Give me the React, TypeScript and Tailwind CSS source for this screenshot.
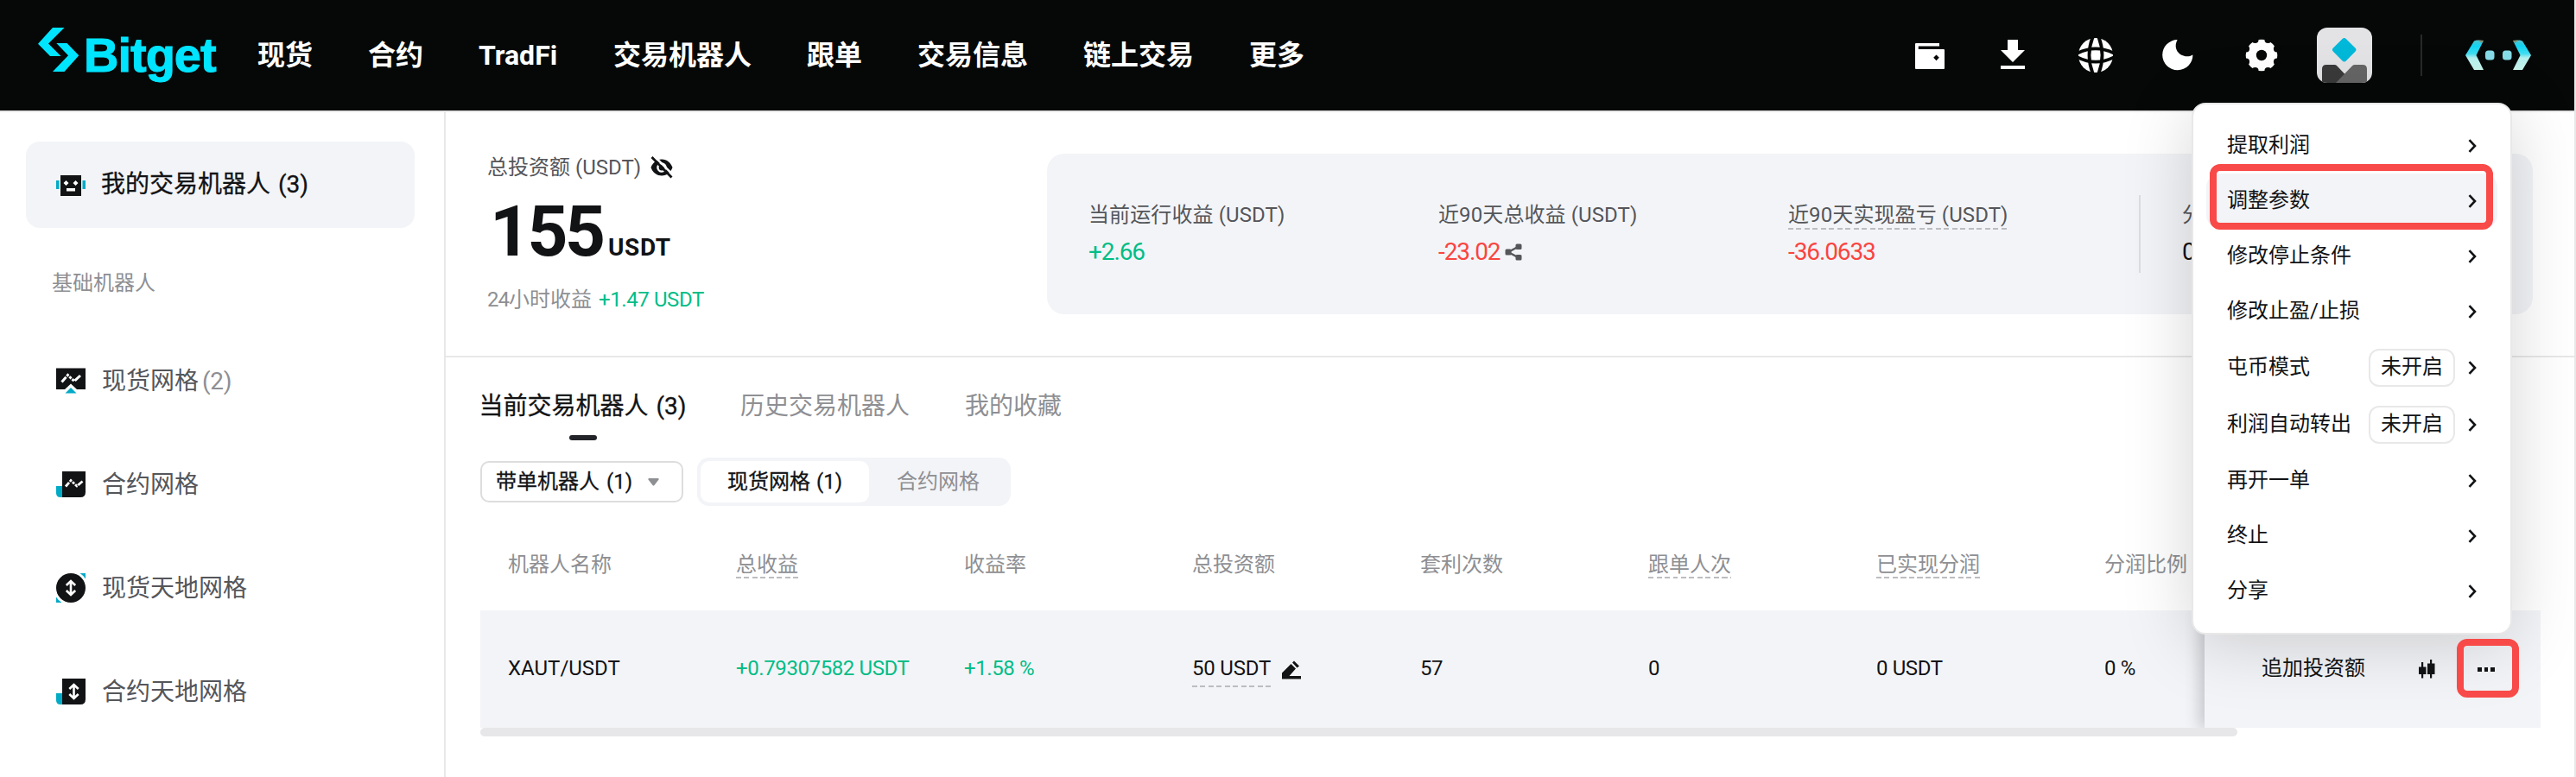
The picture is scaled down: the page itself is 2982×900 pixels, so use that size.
import React from "react";

const FONT = "font-['Roboto','Noto_Sans_CJK_SC',sans-serif]";

function LogoMark() {
  return (
    <svg width="48" height="52" viewBox="0 0 48 52" fill="#00e5ff">
      <path d="M17 0H30.5L12 18.5L26.5 33H14L0 18.7Z" />
      <path d="M21.3 18H33.5L47.3 32.3L30.5 51H17L35 32.3Z" />
    </svg>
  );
}

function WalletIcon() {
  return (
    <svg width="48" height="48" viewBox="0 0 48 48" fill="#fff">
      <path d="M8 10H35V13.6H10.8V17H40Q41 17 41 18V39Q41 40 40 40H8Q7 40 7 39V11Q7 10 8 10ZM31.5 23.4L28.2 26.8L31.5 30.2L34.8 26.8Z" fillRule="evenodd" />
    </svg>
  );
}

function DownloadIcon() {
  return (
    <svg width="48" height="48" viewBox="0 0 48 48" fill="#fff">
      <path d="M18 6H30V18H38L24 32L10 18H18ZM10 36H38V40H10Z" />
    </svg>
  );
}

function GlobeIcon() {
  return (
    <svg width="48" height="48" viewBox="0 0 48 48">
      <circle cx="24" cy="24" r="20" fill="#fff" />
      <g fill="none" stroke="#060808" strokeWidth="3.8">
        <path d="M20.5 3Q12.5 24 20.5 45" />
        <path d="M27.5 3Q35.5 24 27.5 45" />
        <path d="M3 21.6Q24 11 45 21.6" />
        <path d="M3 26.4Q24 37 45 26.4" />
      </g>
    </svg>
  );
}

function MoonIcon() {
  return (
    <svg width="48" height="48" viewBox="0 0 48 48" fill="#fff">
      <path d="M22.6 6A17.6 17.6 0 1 0 40.4 23.4C30 29.5 15.5 19.5 22.6 6Z" />
    </svg>
  );
}

const NOTCHES = [0, 1, 2, 3, 4, 5, 6, 7].map((k) => {
  const a = ((22.5 + 45 * k) * Math.PI) / 180;
  return { x: 24 + 19.4 * Math.cos(a), y: 24 + 19.4 * Math.sin(a) };
});

function GearIcon() {
  return (
    <svg width="48" height="48" viewBox="0 0 48 48">
      <circle cx="24" cy="24" r="18.3" fill="#fff" />
      {NOTCHES.map((n, i) => (
        <circle key={i} cx={n.x} cy={n.y} r="4" fill="#060808" />
      ))}
      <circle cx="24" cy="24" r="6.2" fill="#060808" />
    </svg>
  );
}

function Avatar() {
  return (
    <svg className="rounded-xl" width="64" height="64" viewBox="0 0 64 64">
      <rect width="64" height="64" fill="#e3e3e5" />
      <rect x="21.2" y="15.2" width="21" height="21" rx="3" fill="#00b8d9" transform="rotate(45 31.7 25.7)" />
      <path d="M6 64V48Q6 43 11 43H20.5Q22 43 23 44L33 54.5V64Z" fill="#3a3a3a" />
      <path d="M22 64L41 44.2Q42.200 43 44 43H53Q58 43 58 48V64Z" fill="#656565" />
    </svg>
  );
}

function BracketIcon() {
  return (
    <svg width="76" height="36" viewBox="0 0 76 36">
      <defs>
        <linearGradient id="cy" x1="0" y1="0" x2="0" y2="1">
          <stop offset="0" stopColor="#4fc3d0" />
          <stop offset="0.2" stopColor="#0fd4f5" />
          <stop offset="0.45" stopColor="#3fdcf0" />
          <stop offset="0.6" stopColor="#b5f0ee" />
          <stop offset="1" stopColor="#c8f3ea" />
        </linearGradient>
      </defs>
      <path d="M10 1.500L13 0.500L21 1L12.500 18L21 35H10L0 18Z" fill="url(#cy)" />
      <path d="M66 1.500L63 0.500L55 1L63.500 18L55 35H66L76 18Z" fill="url(#cy)" />
      <path d="M15 0.500L21 1L18.500 4Z" fill="#8a8f6a" />
      <path d="M61 0.500L55 1L57.500 4Z" fill="#8a8f6a" />
      <rect x="23" y="12.500" width="10.500" height="11" rx="3.500" fill="#86dbe6" />
      <rect x="43" y="12.500" width="10.500" height="11" rx="3.500" fill="#86dbe6" />
    </svg>
  );
}

function RobotIcon() {
  return (
    <svg width="34" height="34" viewBox="0 0 34 34">
      <path d="M0 12H3.500V22H0ZM30.500 12H34V22H30.500Z" fill="#03aac6" />
      <rect x="5" y="6" width="24" height="24" fill="#121315" />
      <path d="M11.500 12L14.500 15L11.500 18L8.500 15ZM22.500 12L25.500 15L22.500 18L19.500 15ZM12 21H22V24.500H12Z" fill="#fff" />
    </svg>
  );
}

function SpotGridIcon() {
  return (
    <svg width="34" height="34" viewBox="0 0 34 34">
      <path d="M0 2.500H34V27H24L17 20.500L10 27H0Z" fill="#121315" />
      <path d="M17 25L23.500 31.500H10.500Z" fill="#03aac6" />
      <path d="M6.500 18.500L13.500 10.500L21 17.500L28 11" fill="none" stroke="#fff" strokeWidth="3" strokeDasharray="7.600 1.300 3 1.300 3 1.300 3 1.300 10" />
    </svg>
  );
}

function FuturesGridIcon() {
  return (
    <svg width="34" height="34" viewBox="0 0 34 34">
      <path d="M7 2H34V26Q34 32 28 32H7Z" fill="#121315" />
      <path d="M0 19H7V32H5Q0 32 0 27Z" fill="#03aac6" />
      <path d="M11 19.500L17 12.500L24 19L30.500 13.500" fill="none" stroke="#fff" strokeWidth="2.800" strokeDasharray="6.200 1.300 3 1.300 3 1.300 3 1.300 10" />
    </svg>
  );
}

function SpotSkyIcon() {
  return (
    <svg width="34" height="34" viewBox="0 0 34 34">
      <circle cx="17" cy="17" r="17" fill="#121315" />
      <path d="M27.500 0H34V6.500Q31.500 2.500 27.500 0ZM6.500 34H0V27.500Q2.500 31.500 6.500 34Z" fill="#03aac6" />
      <path d="M17 10V24M11.800 14L17 9L22.200 14M11.800 20L17 25L22.200 20" fill="none" stroke="#fff" strokeWidth="2.600" />
    </svg>
  );
}

function FuturesSkyIcon() {
  return (
    <svg width="34" height="34" viewBox="0 0 34 34">
      <path d="M7 2H34V26Q34 32 28 32H7Z" fill="#121315" />
      <path d="M0 19H7V32H5Q0 32 0 27Z" fill="#03aac6" />
      <path d="M20.500 10V24M15.300 14L20.500 9L25.700 14M15.300 20L20.500 25L25.700 20" fill="none" stroke="#fff" strokeWidth="2.600" />
    </svg>
  );
}

function EyeOffIcon() {
  return (
    <svg width="26" height="26" viewBox="0 0 26 26">
      <path d="M13 3.500C7 3.500 2.500 7.500 0.500 13C2.500 18.500 7 22.500 13 22.500S23.500 18.500 25.500 13C23.500 7.500 19 3.500 13 3.500ZM13 7.200A5.800 5.800 0 1 1 13 18.800A5.800 5.800 0 1 1 13 7.200Z" fill="#121315" fillRule="evenodd" />
      <circle cx="13" cy="13" r="3.400" fill="#121315" />
      <path d="M3.500 -1L27 22.500" stroke="#fff" strokeWidth="2.600" />
      <path d="M1.500 1L24.500 24.500" stroke="#121315" strokeWidth="2.800" />
    </svg>
  );
}

function ShareIcon() {
  return (
    <svg width="20" height="20" viewBox="0 0 20 20" fill="#55565a">
      <path d="M16 3.500L4 10L16 16.500" fill="none" stroke="#55565a" strokeWidth="2.400" />
      <rect x="12.500" y="0.500" width="7" height="6.500" rx="1.500" />
      <rect x="12.500" y="13" width="7" height="6.500" rx="1.500" />
      <rect x="0.500" y="6.500" width="7" height="7" rx="1.500" />
    </svg>
  );
}

function PencilIcon() {
  return (
    <svg width="22" height="22" viewBox="0 0 22 22" fill="#121315">
      <path d="M0 14.500L10.500 4L16 9.500L8.500 18H22V21.500H0Z" />
      <path d="M12 2.500L14 0.500L20 6.500L17.500 8.500Z" />
    </svg>
  );
}

function CandlesIcon() {
  return (
    <svg width="19" height="22" viewBox="0 0 19 22" fill="#121315">
      <path d="M3 3H5.200V8.500H8.500V17H5.200V21.500H3V17H0V8.500H3ZM13 0H15.200V4.500H18.500V17H15.200V21.500H13V17H10V4.500H13Z" />
    </svg>
  );
}

function Chevron() {
  return (
    <svg width="10" height="16" viewBox="0 0 10 16">
      <path d="M1.500 1.200L8 8L1.500 14.800" fill="none" stroke="#121315" strokeWidth="2.600" />
    </svg>
  );
}

const NAV = ["现货", "合约", "TradFi", "交易机器人", "跟单", "交易信息", "链上交易", "更多"];

const SIDE = [
  { icon: <SpotGridIcon />, label: "现货网格", count: "(2)" },
  { icon: <FuturesGridIcon />, label: "合约网格" },
  { icon: <SpotSkyIcon />, label: "现货天地网格" },
  { icon: <FuturesSkyIcon />, label: "合约天地网格" },
];

const COLUMNS = [
  { title: "机器人名称", dashed: false },
  { title: "总收益", dashed: true },
  { title: "收益率", dashed: false },
  { title: "总投资额", dashed: false },
  { title: "套利次数", dashed: false },
  { title: "跟单人次", dashed: true },
  { title: "已实现分润", dashed: true },
  { title: "分润比例", dashed: false },
];

const MENU = [
  { label: "提取利润" },
  { label: "调整参数", active: true },
  { label: "修改停止条件" },
  { label: "修改止盈/止损" },
  { label: "屯币模式", chip: "未开启" },
  { label: "利润自动转出", chip: "未开启" },
  { label: "再开一单" },
  { label: "终止" },
  { label: "分享" },
];

const DASH =
  "bg-[repeating-linear-gradient(90deg,#bcbdc0_0_6px,transparent_6px_9.5px)] bg-[length:100%_2px] bg-bottom bg-no-repeat";

function Header() {
  return (
    <header className="flex h-[130px] shrink-0 items-center border-b-2 border-[#e8e8e8] bg-[#060808]">
      <div className="flex h-full w-[298px] shrink-0 pl-11 pt-8">
        <LogoMark />
        <span className="ml-[5px] font-['Liberation_Sans',sans-serif] text-[56px] font-bold leading-[64px] tracking-[-1px] text-[#00e5ff] [-webkit-text-stroke:1px_#00e5ff]">
          Bitget
        </span>
      </div>
      <nav className="flex flex-1 gap-16 whitespace-nowrap text-[32px] font-bold leading-[48px] text-white">
        {NAV.map((n) => (
          <span key={n} className={n === "TradFi" ? "w-[92px]" : ""}>
            {n}
          </span>
        ))}
      </nav>
      <div className="flex items-center gap-12">
        <WalletIcon />
        <DownloadIcon />
        <GlobeIcon />
        <MoonIcon />
        <GearIcon />
      </div>
      <div className="ml-10">
        <Avatar />
      </div>
      <div className="ml-14 h-12 w-0.5 bg-[#26282b]" />
      <div className="ml-[50px] mr-[52px]">
        <BracketIcon />
      </div>
    </header>
  );
}

function Sidebar() {
  return (
    <aside className="w-[516px] shrink-0 border-r-2 border-[#e8e8e8] pl-[30px] pr-[34px] pt-[34px]">
      <div className="flex h-[100px] w-[450px] items-center rounded-2xl bg-[#f3f4f7] pl-[35px]">
        <RobotIcon />
        <span className="ml-[18px] text-[28px] leading-10 text-[#121315] [word-spacing:2px] [-webkit-text-stroke:0.3px_#121315]">
          我的交易机器人 (3)
        </span>
      </div>
      <div className="mt-[46px] pl-[30px] text-2xl leading-9 text-[#8e8f93]">基础机器人</div>
      <div className="mt-[35px]">
        {SIDE.map((s) => (
          <div key={s.label} className="flex h-[120px] items-center pl-[35px] text-[28px] leading-10 text-[#55565a]">
            {s.icon}
            <span className="ml-[19px] mt-0.5">{s.label}</span>
            {s.count && <span className="ml-1 mt-0.5 tracking-[-0.3px] text-[#8e8f93]">{s.count}</span>}
          </div>
        ))}
      </div>
    </aside>
  );
}

function Stat({ label, value, tone, dashed, share }: { label: string; value: string; tone: string; dashed?: boolean; share?: boolean }) {
  return (
    <div className="w-[405px] shrink-0">
      <div className="flex">
        <span className={`h-[35px] text-2xl leading-9 tracking-[0.1px] text-[#55565a] ${dashed ? DASH : ""}`}>{label}</span>
      </div>
      <div className="mt-1.5 flex items-center">
        <span className={`text-[28px] leading-10 tracking-[-1.1px] ${tone}`}>{value}</span>
        {share && (
          <span className="ml-1.5">
            <ShareIcon />
          </span>
        )}
      </div>
    </div>
  );
}

function Overview() {
  return (
    <section className="flex h-[284px] border-b-2 border-[#e8e8e8]">
      <div className="w-[696px] shrink-0 pl-12 pt-[46px]">
        <div className="flex h-9 items-center text-2xl leading-9 text-[#55565a]">
          <span>总投资额 (USDT)</span>
          <span className="ml-[11px]">
            <EyeOffIcon />
          </span>
        </div>
        <div className="mt-2 flex h-[96px] items-baseline font-bold text-[#121315]">
          <span className="w-[140px] pl-[3px] text-[82px] leading-[96px] tracking-[-3.500px]">155</span>
          <span className="text-[28px] tracking-[0.6px]">USDT</span>
        </div>
        <div className="mt-[13px] flex text-2xl leading-9 text-[#8e8f93]">
          <span>
            <span className="tracking-[-1px]">24</span>小时收益
          </span>
          <span className="ml-2 tracking-[-0.4px] text-[#00bd87]">+1.47 USDT</span>
        </div>
      </div>
      <div className="mt-12 flex h-[186px] w-[1720px] overflow-hidden rounded-[20px] bg-[#f3f4f7] pl-12 pt-[53px]">
        <Stat label="当前运行收益 (USDT)" value="+2.66" tone="text-[#00bd87]" />
        <Stat label="近90天总收益 (USDT)" value="-23.02" tone="text-[#fa453f]" share />
        <Stat label="近90天实现盈亏 (USDT)" value="-36.0633" tone="text-[#fa453f]" dashed />
        <div className="-mt-[5px] ml-px h-[90px] w-0.5 shrink-0 bg-[#dcdde0]" />
        <div className="ml-12">
          <Stat label="分" value="0" tone="text-[#121315]" />
        </div>
      </div>
    </section>
  );
}

function Tabs() {
  return (
    <div className="flex gap-16 pl-10 pt-[37px] text-[28px] leading-10 text-[#8e8f93]">
      <div className="flex w-[237px] flex-col items-center whitespace-nowrap text-[#121315]">
        <span className="[word-spacing:2px] [-webkit-text-stroke:0.3px_#121315]">当前交易机器人 (3)</span>
        <span className="mt-[13px] h-1.5 w-8 rounded-sm bg-[#222429]" />
      </div>
      <span>历史交易机器人</span>
      <span>我的收藏</span>
    </div>
  );
}

function Filters() {
  return (
    <div className="mt-5 flex h-14 items-center pl-10 text-2xl">
      <div className="flex h-12 w-[235px] items-center rounded-[10px] border-2 border-[#dddddf] pl-4 text-[#121315]">
        <span className="[word-spacing:2px] [-webkit-text-stroke:0.3px_#121315]">带单机器人 (1)</span>
        <svg className="ml-auto mr-[26px]" width="13" height="9" viewBox="0 0 13 9">
          <path d="M1 0H12Q13 0.500 12.500 1.500L7.500 8Q6.500 9 5.500 8L0.500 1.500Q0 0.500 1 0Z" fill="#8e8f93" />
        </svg>
      </div>
      <div className="ml-4 flex h-14 w-[363px] items-center rounded-[14px] bg-[#f3f4f7] pl-1">
        <span className="flex h-12 w-[195px] items-center justify-center rounded-[10px] bg-white text-[#121315] [word-spacing:1px] [-webkit-text-stroke:0.3px_#121315]">
          现货网格 (1)
        </span>
        <span className="ml-8 text-[#8e8f93]">合约网格</span>
      </div>
    </div>
  );
}

function Cell({ children, className = "" }: { children: React.ReactNode; className?: string }) {
  return <div className={`w-[264px] shrink-0 whitespace-nowrap ${className}`}>{children}</div>;
}

function BotTable() {
  return (
    <div className="ml-10 mt-[50px] w-[2385px] text-2xl">
      <div className="flex h-[71px] pl-8 text-[#8e8f93]">
        {COLUMNS.map((c) => (
          <Cell key={c.title}>
            <span className={`inline-block h-[34px] leading-9 ${c.dashed ? DASH : ""}`}>{c.title}</span>
          </Cell>
        ))}
      </div>
      <div className="flex h-[136px] items-center overflow-hidden bg-[#f3f4f7] text-[#121315]">
        <div className="flex w-[1996px] shrink-0 items-center overflow-hidden pb-0.5 pl-8 tracking-[-0.4px]">
          <Cell className="tracking-[0px]">XAUT/USDT</Cell>
          <Cell className="text-[#00bd87]">+0.79307582 USDT</Cell>
          <Cell className="text-[#00bd87]">+1.58 %</Cell>
          <Cell className="flex items-center">
            <span className={`mt-1 h-10 leading-9 tracking-[-0.2px] ${DASH}`}>50 USDT</span>
            <span className="ml-[13px] mt-1">
              <PencilIcon />
            </span>
          </Cell>
          <Cell>57</Cell>
          <Cell>0</Cell>
          <Cell>0 USDT</Cell>
          <Cell>0 %</Cell>
        </div>
        <div className="flex h-full flex-1 items-center bg-[#f3f4f7] pl-[66px] shadow-[-6px_0_16px_rgba(30,40,60,0.22)]">
          <span className="-mt-0.5">追加投资额</span>
          <span className="ml-[62px]">
            <CandlesIcon />
          </span>
          <span className="ml-[49px] flex gap-[3px]">
            <i className="h-[5px] w-[4.500px] bg-[#121315]" />
            <i className="h-[5px] w-[4.500px] bg-[#121315]" />
            <i className="h-[5px] w-[4.500px] bg-[#121315]" />
          </span>
        </div>
      </div>
      <div className="h-2.5 w-[2034px] rounded-[5px] bg-[#e7e7e9]" />
    </div>
  );
}

function ActionMenu() {
  return (
    <div className="absolute left-[2537px] top-[119px] w-[371px] rounded-2xl border-2 border-[#e8e8e8] bg-white px-[15px] pb-4 pt-4 text-2xl text-[#121315] shadow-[0_10px_80px_rgba(0,0,0,0.17)]">
      {MENU.map((m) => (
        <div
          key={m.label}
          className={`flex items-center rounded-2xl pl-6 pr-6 ${m.chip ? "h-[66px]" : "h-16"} ${m.active ? "bg-[#f3f4f7]" : ""}`}
        >
          <span className="-mt-0.5 flex-1 whitespace-nowrap">{m.label}</span>
          {m.chip && (
            <span className="mr-[15px] flex h-11 w-[100px] items-center justify-center rounded-xl border-2 border-[#e8e8e8]">
              <span className="-mt-0.5 leading-9">{m.chip}</span>
            </span>
          )}
          <Chevron />
        </div>
      ))}
    </div>
  );
}

export default function App() {
  return (
    <div className={`relative flex h-[900px] w-[2982px] flex-col overflow-hidden bg-white ${FONT}`}>
      <Header />
      <div className="flex flex-1">
        <Sidebar />
        <main className="min-w-0 flex-1">
          <Overview />
          <Tabs />
          <Filters />
          <BotTable />
        </main>
      </div>
      <ActionMenu />
      <div className="absolute left-[2558px] top-[190px] h-[76px] w-[328px] rounded-xl border-8 border-[#f84a48]" />
      <div className="absolute left-[2844px] top-[740px] h-[68px] w-[72px] rounded-xl border-8 border-[#f84a48]" />
      <div className="absolute right-0 top-0 h-full w-0.5 bg-[#e8e8e8]" />
    </div>
  );
}
